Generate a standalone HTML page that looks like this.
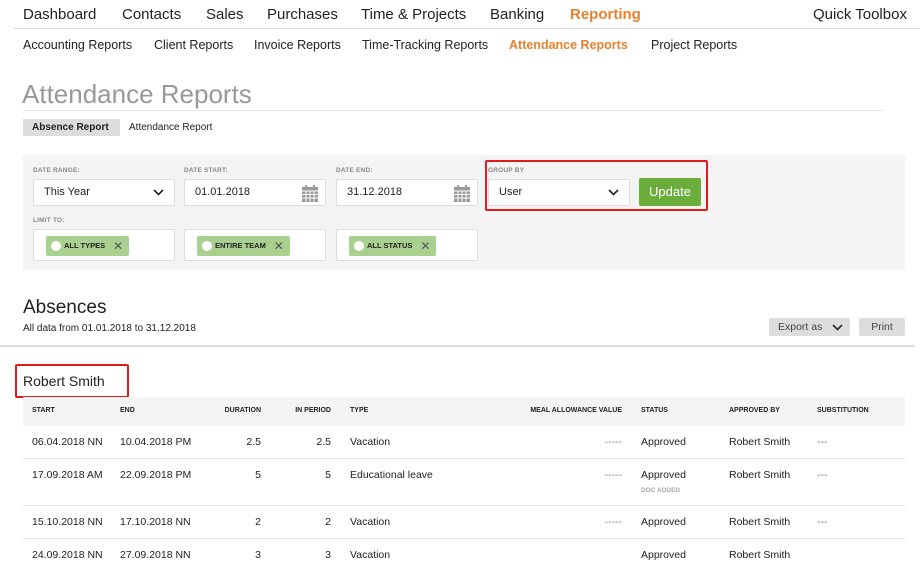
<!DOCTYPE html>
<html><head><style>
*{margin:0;padding:0;box-sizing:border-box}
body{width:920px;height:555px;overflow:hidden;background:#fff;font-family:"Liberation Sans",sans-serif;color:#222;position:relative}
.a{position:absolute;white-space:nowrap}
.nav{font-size:15px;top:6px}
.sub{font-size:12.5px;top:38px}
.lbl{font-size:6.5px;font-weight:bold;color:#888;letter-spacing:.2px}
.box{position:absolute;background:#fff;border:1px solid #ddd;border-radius:2px;font-size:11px;padding:0 10px;line-height:25px}
.chip{position:absolute;top:6px;left:12px;height:20px;background:#a9d08e;border-radius:2px;font-size:7.5px;font-weight:bold;line-height:20px;padding-left:18px;padding-right:24px}
.chip:before{content:"";position:absolute;left:5px;top:5px;width:10px;height:10px;border-radius:50%;background:#fff}
.chip:after{content:"\2715";position:absolute;right:6px;top:0;font-size:12px;font-weight:normal;color:#555}
.th{font-size:7px;font-weight:bold;top:407px}
.td{font-size:10.5px}
.r{text-align:right}
.hl{position:absolute;left:23px;width:882px;height:1px;background:#e3e3e3}
.chev{position:absolute;right:10px;top:9px}
.cal{position:absolute;right:7px;top:5px}
</style></head><body>
<div class="a nav" style="left:23px">Dashboard</div>
<div class="a nav" style="left:122px">Contacts</div>
<div class="a nav" style="left:206px">Sales</div>
<div class="a nav" style="left:267px">Purchases</div>
<div class="a nav" style="left:361px">Time &amp; Projects</div>
<div class="a nav" style="left:490px">Banking</div>
<div class="a nav" style="left:570px;color:#e8802c;font-weight:bold">Reporting</div>
<div class="a nav" style="left:813px">Quick Toolbox</div>
<div class="a" style="left:14px;top:28px;width:906px;height:1px;background:#ddd"></div>
<div class="a sub" style="left:23px">Accounting Reports</div>
<div class="a sub" style="left:154px">Client Reports</div>
<div class="a sub" style="left:254px">Invoice Reports</div>
<div class="a sub" style="left:362px">Time-Tracking Reports</div>
<div class="a sub" style="left:509px;color:#e8802c;font-weight:bold">Attendance Reports</div>
<div class="a sub" style="left:651px">Project Reports</div>
<div class="a" style="left:22px;top:79px;font-size:26px;color:#999">Attendance Reports</div>
<div class="a" style="left:23px;top:110px;width:860px;height:1px;background:#e5e5e5"></div>
<div class="a" style="left:23px;top:119px;width:97px;height:17px;background:#ddd;font-size:10px;font-weight:bold;line-height:17px;padding-left:9px">Absence Report</div>
<div class="a" style="left:129px;top:119px;font-size:10px;line-height:17px">Attendance Report</div>

<div class="a" style="left:23px;top:155px;width:882px;height:115px;background:#f4f4f4"></div>
<div class="a lbl" style="left:33px;top:167px">DATE RANGE:</div>
<div class="a lbl" style="left:184px;top:167px">DATE START:</div>
<div class="a lbl" style="left:336px;top:167px">DATE END:</div>
<div class="a lbl" style="left:488px;top:167px">GROUP BY</div>
<div class="box" style="left:33px;top:179px;width:142px;height:27px">This Year<svg class="chev" width="11" height="7" viewBox="0 0 11 7"><path d="M1 1l4.5 4.5L10 1" fill="none" stroke="#222" stroke-width="1.6"/></svg></div>
<div class="box" style="left:184px;top:179px;width:142px;height:27px">01.01.2018<svg class="cal" width="16" height="17" viewBox="0 0 16 17"><rect x="0" y="2" width="16" height="15" fill="#999"/><rect x="3" y="0" width="2" height="4" fill="#999"/><rect x="11" y="0" width="2" height="4" fill="#999"/><path d="M0 6h16M0 9.5h16M0 13h16M4 6v11M8 6v11M12 6v11" stroke="#fff" stroke-width="1"/></svg></div>
<div class="box" style="left:336px;top:179px;width:142px;height:27px">31.12.2018<svg class="cal" width="16" height="17" viewBox="0 0 16 17"><rect x="0" y="2" width="16" height="15" fill="#999"/><rect x="3" y="0" width="2" height="4" fill="#999"/><rect x="11" y="0" width="2" height="4" fill="#999"/><path d="M0 6h16M0 9.5h16M0 13h16M4 6v11M8 6v11M12 6v11" stroke="#fff" stroke-width="1"/></svg></div>
<div class="box" style="left:488px;top:179px;width:142px;height:27px">User<svg class="chev" width="11" height="7" viewBox="0 0 11 7"><path d="M1 1l4.5 4.5L10 1" fill="none" stroke="#222" stroke-width="1.6"/></svg></div>
<div class="a" style="left:639px;top:178px;width:62px;height:28px;background:#6aad3a;border-radius:2px;color:#fff;font-size:13px;text-align:center;line-height:28px">Update</div>
<div class="a" style="left:485px;top:160px;width:223px;height:51px;border:2px solid #e41b1b;border-radius:2px"></div>
<div class="a lbl" style="left:33px;top:217px">LIMIT TO:</div>
<div class="box" style="left:33px;top:229px;width:142px;height:32px"><div class="chip">ALL TYPES</div></div>
<div class="box" style="left:184px;top:229px;width:142px;height:32px"><div class="chip">ENTIRE TEAM</div></div>
<div class="box" style="left:336px;top:229px;width:142px;height:32px"><div class="chip">ALL STATUS</div></div>

<div class="a" style="left:23px;top:297px;font-size:19px">Absences</div>
<div class="a" style="left:23px;top:323px;font-size:10px">All data from 01.01.2018 to 31.12.2018</div>
<div class="a" style="left:769px;top:318px;width:81px;height:18px;background:#ddd;border-radius:2px;font-size:10.5px;line-height:18px;padding-left:9px;color:#444">Export as <svg style="position:absolute;right:7px;top:6px" width="11" height="7" viewBox="0 0 11 7"><path d="M1 1l4.5 4.5L10 1" fill="none" stroke="#333" stroke-width="1.8"/></svg></div>
<div class="a" style="left:859px;top:318px;width:46px;height:18px;background:#ddd;border-radius:2px;font-size:10.5px;line-height:18px;text-align:center;color:#444">Print</div>
<div class="a" style="left:0;top:345px;width:915px;height:2px;background:#ddd"></div>

<div class="a" style="left:15px;top:364px;width:114px;height:34px;border:2px solid #e41b1b;border-radius:2px"></div>
<div class="a" style="left:23px;top:373px;font-size:14px">Robert Smith</div>
<div class="a" style="left:23px;top:397px;width:882px;height:29px;background:#f4f4f4"></div>
<div class="a th" style="left:32px">START</div>
<div class="a th" style="left:120px">END</div>
<div class="a th r" style="left:200px;width:61px">DURATION</div>
<div class="a th r" style="left:270px;width:61px">IN PERIOD</div>
<div class="a th" style="left:350px">TYPE</div>
<div class="a th r" style="left:500px;width:122px">MEAL ALLOWANCE VALUE</div>
<div class="a th" style="left:641px">STATUS</div>
<div class="a th" style="left:729px">APPROVED BY</div>
<div class="a th" style="left:817px">SUBSTITUTION</div>

<div class="a td" style="left:32px;top:436px">06.04.2018 NN</div>
<div class="a td" style="left:120px;top:436px">10.04.2018 PM</div>
<div class="a td r" style="left:200px;top:436px;width:61px">2.5</div>
<div class="a td r" style="left:270px;top:436px;width:61px">2.5</div>
<div class="a td" style="left:350px;top:436px">Vacation</div>
<div class="a td r" style="left:560px;top:436px;width:62px;color:#888">-----</div>
<div class="a td" style="left:641px;top:436px">Approved</div>
<div class="a td" style="left:729px;top:436px">Robert Smith</div>
<div class="a td" style="left:817px;top:436px;color:#777">---</div>
<div class="hl" style="top:458px"></div>

<div class="a td" style="left:32px;top:469px">17.09.2018 AM</div>
<div class="a td" style="left:120px;top:469px">22.09.2018 PM</div>
<div class="a td r" style="left:200px;top:469px;width:61px">5</div>
<div class="a td r" style="left:270px;top:469px;width:61px">5</div>
<div class="a td" style="left:350px;top:469px">Educational leave</div>
<div class="a td r" style="left:560px;top:469px;width:62px;color:#888">-----</div>
<div class="a td" style="left:641px;top:469px">Approved</div>
<div class="a" style="left:641px;top:487px;font-size:6.5px;font-weight:bold;color:#aaa">DOC ADDED</div>
<div class="a td" style="left:729px;top:469px">Robert Smith</div>
<div class="a td" style="left:817px;top:469px;color:#777">---</div>
<div class="hl" style="top:505px"></div>

<div class="a td" style="left:32px;top:516px">15.10.2018 NN</div>
<div class="a td" style="left:120px;top:516px">17.10.2018 NN</div>
<div class="a td r" style="left:200px;top:516px;width:61px">2</div>
<div class="a td r" style="left:270px;top:516px;width:61px">2</div>
<div class="a td" style="left:350px;top:516px">Vacation</div>
<div class="a td r" style="left:560px;top:516px;width:62px;color:#888">-----</div>
<div class="a td" style="left:641px;top:516px">Approved</div>
<div class="a td" style="left:729px;top:516px">Robert Smith</div>
<div class="a td" style="left:817px;top:516px;color:#777">---</div>
<div class="hl" style="top:538px"></div>

<div class="a td" style="left:32px;top:549px">24.09.2018 NN</div>
<div class="a td" style="left:120px;top:549px">27.09.2018 NN</div>
<div class="a td r" style="left:200px;top:549px;width:61px">3</div>
<div class="a td r" style="left:270px;top:549px;width:61px">3</div>
<div class="a td" style="left:350px;top:549px">Vacation</div>
<div class="a td" style="left:641px;top:549px">Approved</div>
<div class="a td" style="left:729px;top:549px">Robert Smith</div>
</body></html>
